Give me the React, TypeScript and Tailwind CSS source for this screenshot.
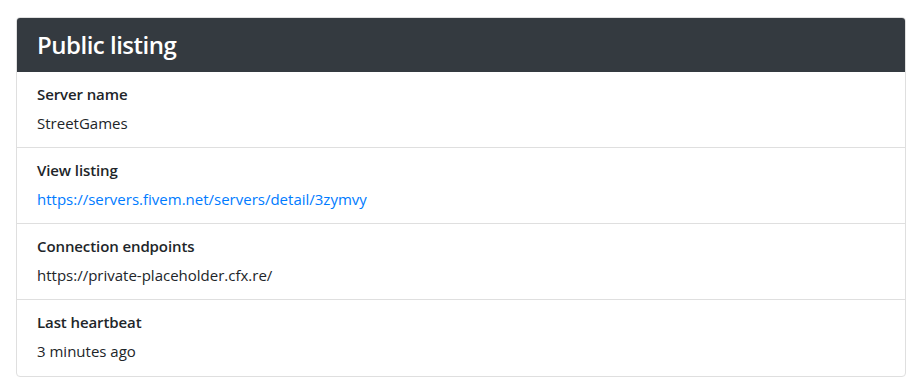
import React from 'react';

interface Fila {
  etiqueta: string;
  valor: string;
  enlace?: boolean;
}

const filas: Fila[] = [
  { etiqueta: 'Server name', valor: 'StreetGames' },
  { etiqueta: 'View listing', valor: 'https://servers.fivem.net/servers/detail/3zymvy', enlace: true },
  { etiqueta: 'Connection endpoints', valor: 'https://private-placeholder.cfx.re/' },
  { etiqueta: 'Last heartbeat', valor: '3 minutes ago' },
];

const App: React.FC = () => {
  return (
    <div className="min-h-screen bg-white pt-[17px] px-4 font-['Open_Sans','Liberation_Sans',sans-serif] text-[#212529]">
      <div className="w-[890px] rounded-[4px] border border-[#dfdfdf] overflow-hidden">
        {/* Cabecera */}
        <div className="bg-[#343a40] h-[55px] -mx-px -mt-px px-[21px] flex items-center">
          <h4 className="text-white text-[24px] font-semibold leading-[29px] tracking-[-0.5px]">Public listing</h4>
        </div>

        {/* Filas */}
        {filas.map((fila, indice) => {
          const esUltimo = indice === filas.length - 1;
          return (
            <div
              key={fila.etiqueta}
              className={`px-5 pt-[10px] ${esUltimo ? 'pb-[13px]' : 'pb-3 border-b border-[#dfdfdf]'}`}
            >
              <div className="text-[15px] font-semibold leading-6 tracking-[-0.1px]">{fila.etiqueta}</div>
              {fila.enlace ? (
                <a href="#" className="block mt-[5px] text-[15px] leading-6 text-[#007bff]">
                  {fila.valor}
                </a>
              ) : (
                <div className="mt-[5px] text-[15px] leading-6">{fila.valor}</div>
              )}
            </div>
          );
        })}
      </div>
    </div>
  );
};

export default App;
